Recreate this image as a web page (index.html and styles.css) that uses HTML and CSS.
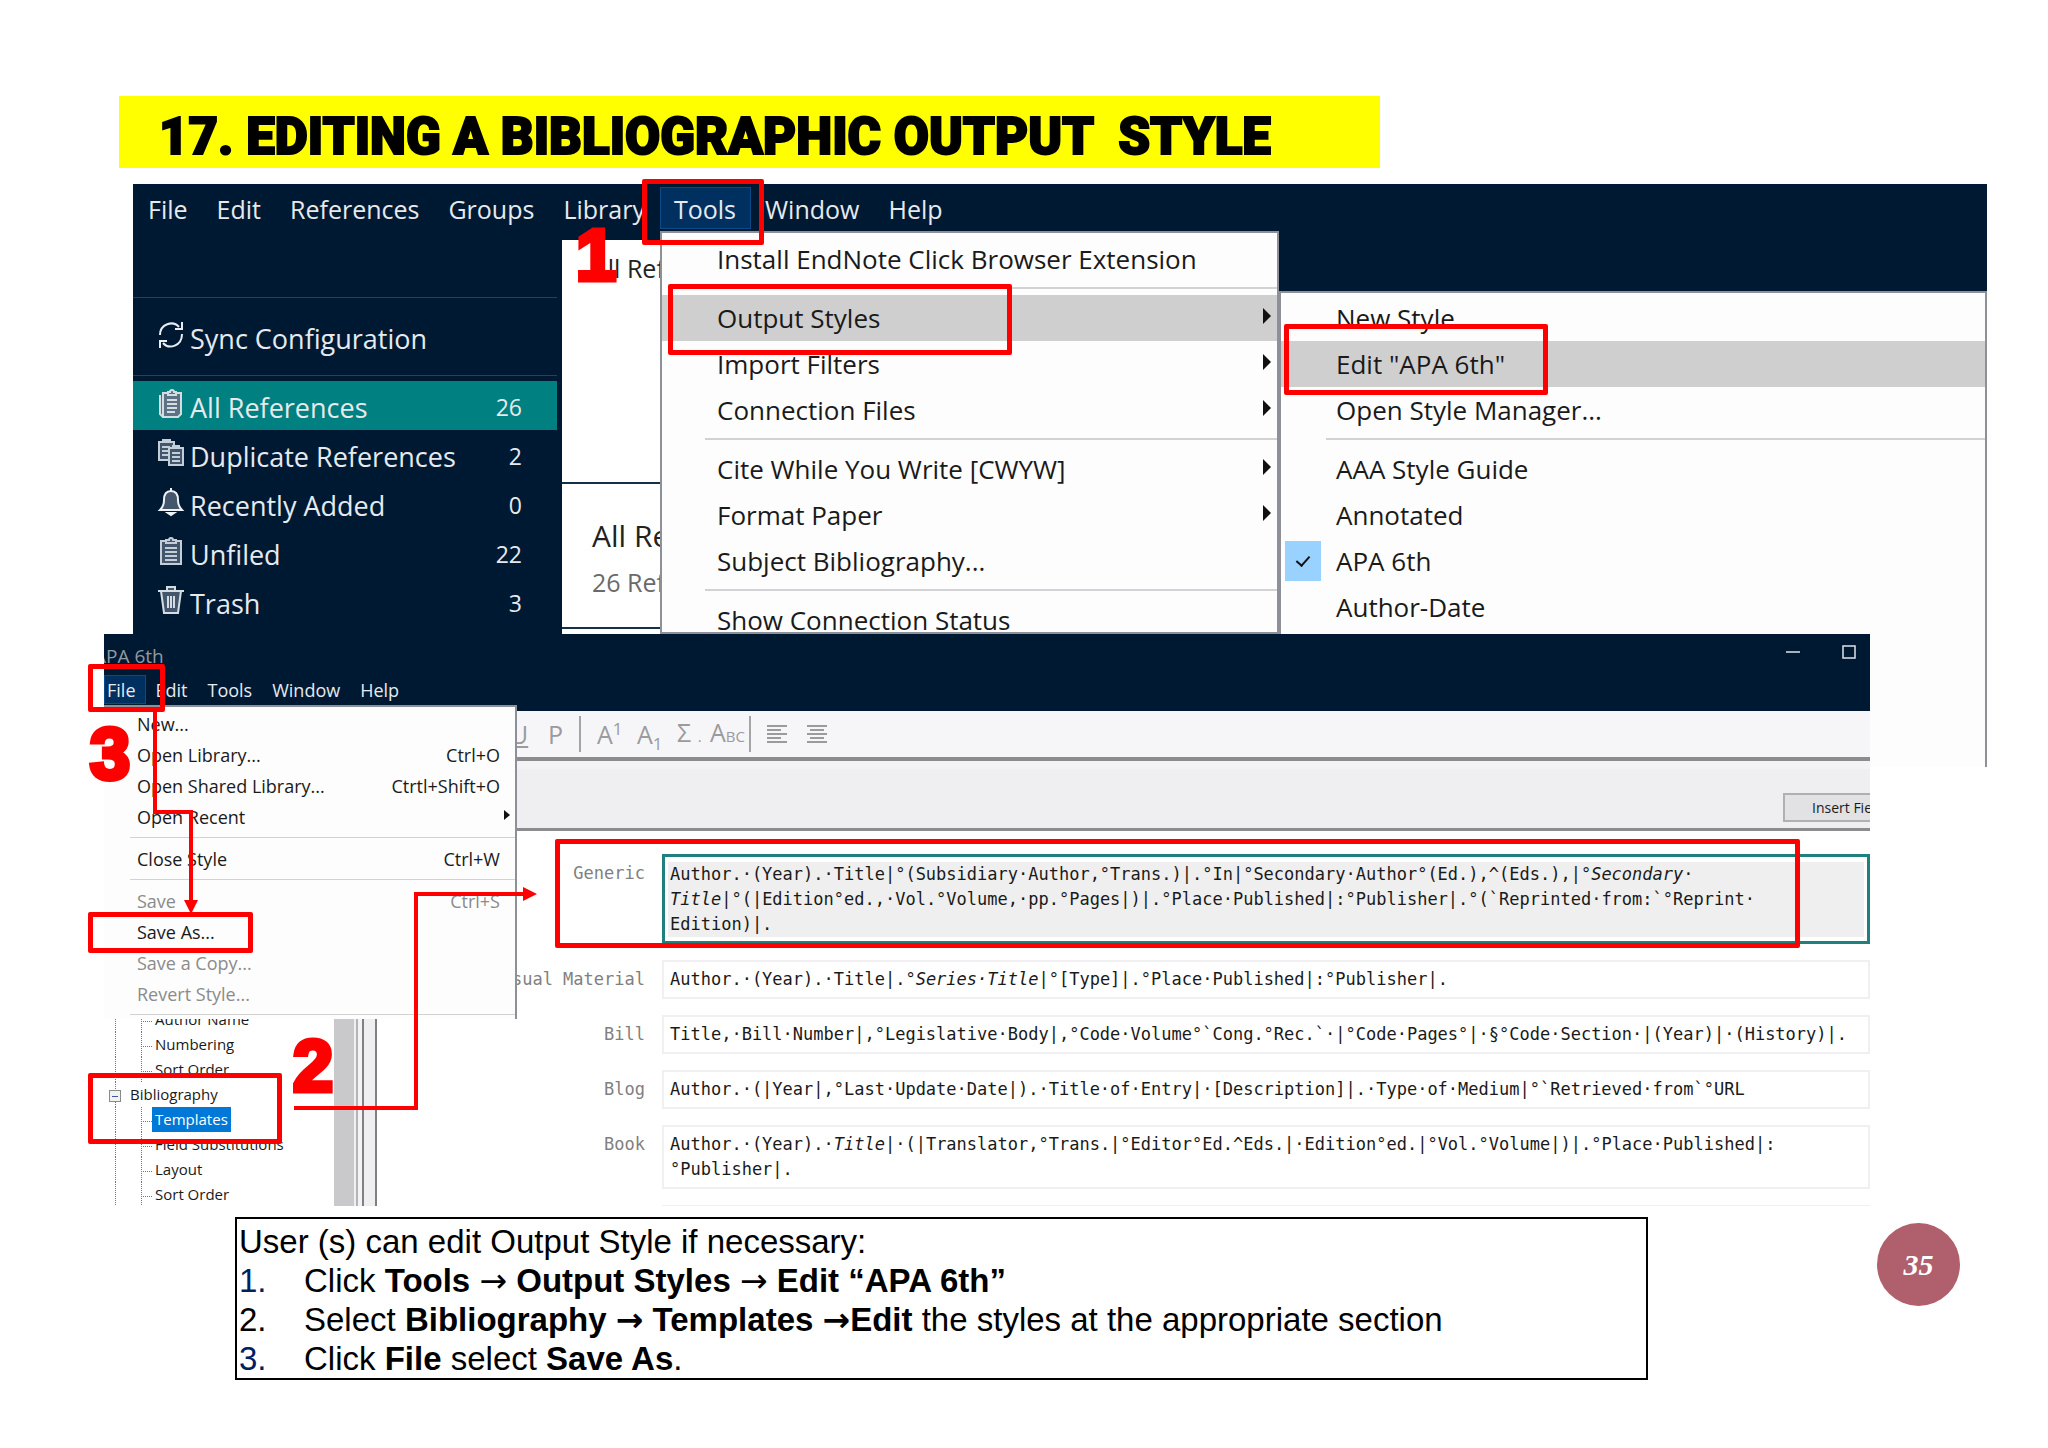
FILE: index.html
```html
<!DOCTYPE html>
<html lang="en">
<head>
    <meta charset="UTF-8">
    <meta name="viewport" content="width=device-width, initial-scale=1.0">
    <title>Editing a Bibliographic Output Style</title>
    <link rel="stylesheet" href="styles.css">
</head>
<body>
    <h1 class="slide-title">17. EDITING A BIBLIOGRAPHIC OUTPUT  STYLE</h1>

    <!-- Library window -->
    <section class="library">
        <nav class="menubar">
            <button>File</button>
            <button>Edit</button>
            <button>References</button>
            <button>Groups</button>
            <button>Library</button>
            <button class="open">Tools</button>
            <button>Window</button>
            <button>Help</button>
        </nav>

        <div class="library-body">
            <aside class="sidebar">
                <button class="side-row sync">
                    <svg class="icon" viewBox="0 0 28 30" fill="none" stroke="#e8edf2" stroke-width="2"><path d="M3 15C3 4 16 0 22 7M25 2v7h-7M25 14C25 26 12 30 6 23M3 28v-7h7"/></svg>
                    <span>Sync Configuration</span>
                </button>
                <button class="side-row active">
                    <svg class="icon" viewBox="0 0 28 30" fill="#5d7285" stroke="#d5dde4" stroke-width="2"><path d="M3 6v19l3 3h13"/><path d="M6 4h18v21l-3 3H6z"/><path d="M11 6V3h2a2 2 0 0 1 4 0h2v3zM10 11h10M10 15h10M10 19h10M10 23h8"/></svg>
                    <span>All References</span><span class="count">26</span>
                </button>
                <button class="side-row">
                    <svg class="icon" viewBox="0 0 28 30" fill="#43566b" stroke="#c3ced8" stroke-width="2"><path d="M2 4h15v18H2zM6 4V2h7v2M5 9h8M5 13h8M5 17h6"/><path d="M12 10h14v17H12zM16 10V8h6v2M15 15h8M15 19h8M15 23h8"/></svg>
                    <span>Duplicate References</span><span class="count">2</span>
                </button>
                <button class="side-row">
                    <svg class="icon" viewBox="0 0 28 30" fill="#43566b" stroke="#eef2f5" stroke-width="2"><path d="M14 4c-5 0-7 4-7 9 0 5-1 7-4 10h22c-3-3-4-5-4-10 0-5-2-9-7-9zM14 1v3"/><path d="M11 26h6l-3 2z" fill="#eef2f5"/></svg>
                    <span>Recently Added</span><span class="count">0</span>
                </button>
                <button class="side-row">
                    <svg class="icon" viewBox="0 0 28 30" fill="#43566b" stroke="#c3ced8" stroke-width="2"><path d="M4 5h20v23H4z"/><path d="M9 7V4h3a2 2 0 0 1 4 0h3v3zM8 12h12M8 16h12M8 20h12M8 24h12"/></svg>
                    <span>Unfiled</span><span class="count">22</span>
                </button>
                <button class="side-row">
                    <svg class="icon" viewBox="0 0 28 30" fill="#43566b" stroke="#d5dde4" stroke-width="2"><path d="M4 6h20l-3 22H7zM1 6h26M10 5V2h8v3M11 11v12M14 11v12M17 11v12"/></svg>
                    <span>Trash</span><span class="count">3</span>
                </button>
            </aside>
            <main class="results">
                <p class="crumb">All References</p>
                <div class="group">
                    <h2>All References</h2>
                    <p>26 References</p>
                </div>
            </main>
        </div>

        <div class="menu tools-menu">
            <button>Install EndNote Click Browser Extension</button>
            <hr>
            <button class="selected sub">Output Styles</button>
            <button class="sub">Import Filters</button>
            <button class="sub">Connection Files</button>
            <hr>
            <button class="sub">Cite While You Write [CWYW]</button>
            <button class="sub">Format Paper</button>
            <button>Subject Bibliography...</button>
            <hr>
            <button>Show Connection Status</button>
        </div>

        <div class="menu styles-menu">
            <button>New Style</button>
            <button class="selected">Edit "APA 6th"</button>
            <button>Open Style Manager...</button>
            <hr>
            <button>AAA Style Guide</button>
            <button>Annotated</button>
            <label class="check-item"><input type="checkbox" checked>APA 6th</label>
            <button>Author-Date</button>
        </div>

        <div class="frame frame-tools"></div>
        <div class="frame frame-output"></div>
        <div class="frame frame-edit"></div>
        <span class="step step-1">1</span>
    </section>

    <!-- Style editor window -->
    <section class="editor">
        <div class="editor-window">
            <header class="editor-header">
                <div class="titlebar">
                    <span class="window-name">APA 6th</span>
                    <button class="window-button" aria-label="Minimize"><svg viewBox="0 0 14 14" stroke="#dfe4e9" stroke-width="1.5"><path d="M0 7h14"/></svg></button>
                    <button class="window-button" aria-label="Maximize"><svg viewBox="0 0 14 14" fill="none" stroke="#dfe4e9" stroke-width="1.5"><path d="M1 1h12v12H1z"/></svg></button>
                </div>
                <nav class="menubar small">
                    <button class="open">File</button>
                    <button>Edit</button>
                    <button>Tools</button>
                    <button>Window</button>
                    <button>Help</button>
                </nav>
            </header>

            <div class="toolbar">
                <button class="underline">U</button>
                <button>P</button>
                <i class="divider"></i>
                <button>A<sup>1</sup></button>
                <button>A<sub>1</sub></button>
                <button>Σ <small>.</small></button>
                <button class="caps">A<small>BC</small></button>
                <i class="divider"></i>
                <button aria-label="Align left"><svg viewBox="0 0 20 20" stroke="#9b9b9d" stroke-width="2"><path d="M0 2h20M0 6h14M0 10h20M0 14h14M0 18h20"/></svg></button>
                <button aria-label="Center"><svg viewBox="0 0 20 20" stroke="#9b9b9d" stroke-width="2"><path d="M0 2h20M3 6h14M0 10h20M3 14h14M0 18h20"/></svg></button>
            </div>
            <div class="insert-bar"><button>Insert Field</button></div>

            <div class="editor-body">
                <ul class="tree">
                    <li class="leaf">Author Name</li>
                    <li class="leaf">Numbering</li>
                    <li class="leaf">Sort Order</li>
                    <li class="branch"><button class="toggle" aria-label="Collapse"></button>Bibliography</li>
                    <li class="leaf"><span class="picked">Templates</span></li>
                    <li class="leaf">Field Substitutions</li>
                    <li class="leaf">Layout</li>
                    <li class="leaf">Sort Order</li>
                </ul>
                <div class="splitter"></div>
                <div class="templates">
                    <span class="name" id="generic">Generic</span>
                    <div class="field focused" role="textbox" contenteditable="true" aria-labelledby="generic"><div class="shade">Author.·(Year).·Title|°(Subsidiary·Author,°Trans.)|.°In|°Secondary·Author°(Ed.),^(Eds.),|°<em>Secondary</em>·<br><em>Title</em>|°(|Edition°ed.,·Vol.°Volume,·pp.°Pages|)|.°Place·Published|:°Publisher|.°(`Reprinted·from:`°Reprint·<br>Edition)|.</div></div>

                    <span class="name" id="audio">Audiovisual Material</span>
                    <div class="field" role="textbox" contenteditable="true" aria-labelledby="audio">Author.·(Year).·Title|.°<em>Series·Title</em>|°[Type]|.°Place·Published|:°Publisher|.</div>

                    <span class="name" id="bill">Bill</span>
                    <div class="field" role="textbox" contenteditable="true" aria-labelledby="bill">Title,·Bill·Number|,°Legislative·Body|,°Code·Volume°`Cong.°Rec.`·|°Code·Pages°|·§°Code·Section·|(Year)|·(History)|.</div>

                    <span class="name" id="blog">Blog</span>
                    <div class="field" role="textbox" contenteditable="true" aria-labelledby="blog">Author.·(|Year|,°Last·Update·Date|).·Title·of·Entry|·[Description]|.·Type·of·Medium|°`Retrieved·from`°URL</div>

                    <span class="name" id="book">Book</span>
                    <div class="field" role="textbox" contenteditable="true" aria-labelledby="book">Author.·(Year).·<em>Title</em>|·(|Translator,°Trans.|°Editor°Ed.^Eds.|·Edition°ed.|°Vol.°Volume|)|.°Place·Published|:<br>°Publisher|.</div>

                    <span></span>
                    <div class="field"></div>
                </div>
            </div>
        </div>

        <div class="menu file-menu">
            <button>New...</button>
            <button>Open Library...<kbd>Ctrl+O</kbd></button>
            <button>Open Shared Library...<kbd>Ctrtl+Shift+O</kbd></button>
            <button class="sub">Open Recent</button>
            <hr>
            <button>Close Style<kbd>Ctrl+W</kbd></button>
            <hr>
            <button disabled>Save<kbd>Ctrl+S</kbd></button>
            <button>Save As...</button>
            <button disabled>Save a Copy...</button>
            <button disabled>Revert Style...</button>
            <hr>
        </div>

        <div class="frame frame-file"></div>
        <div class="frame frame-save"></div>
        <div class="frame frame-bib"></div>
        <div class="frame frame-generic"></div>
        <span class="step step-2">2</span>
        <span class="step step-3">3</span>
        <svg class="arrows" viewBox="0 0 460 500" width="460" height="500" fill="none" stroke="#f00" stroke-width="4">
            <path d="M51 78v100h36v90"/>
            <path d="M80 266h14l-7 14z" fill="#f00" stroke="none"/>
            <path d="M190 474h122V260h110"/>
            <path d="M419 253v14l14-7z" fill="#f00" stroke="none"/>
        </svg>
    </section>

    <footer class="slide-footer">
        <div class="note">
            <p>User (s) can edit Output Style if necessary:</p>
            <ol>
                <li>Click <b>Tools</b> <span class="arrow">→</span> <b>Output Styles</b> <span class="arrow">→</span> <b>Edit “APA 6th”</b></li>
                <li>Select <b>Bibliography <span class="arrow">→</span> Templates <span class="arrow">→</span>Edit</b> the styles at the appropriate section</li>
                <li>Click <b>File</b> select <b>Save As</b>.</li>
            </ol>
        </div>
        <span class="page-number">35</span>
    </footer>
</body>
</html>
```
FILE: styles.css
```css
* { box-sizing: border-box; }
body { margin: 0; padding-top: 96px; background-color: #fff; color: #1a1a1a; font-family: "Open Sans", "Noto Sans", sans-serif; font-size: 25px; }
p, h1, h2, ul, ol { margin: 0; padding: 0; font-weight: normal; }
button { margin: 0; padding: 0; border: none; background: none; color: inherit; font: inherit; text-align: left; white-space: nowrap; }

.slide-title { width: 1261px; max-width: 100%; height: 72px; margin-left: 119px; padding-left: 40px; background-color: #ff0; color: #000; font-family: Roboto, "Liberation Sans", sans-serif; font-size: 51px; font-weight: 900; line-height: 82px; white-space: pre; -webkit-text-stroke: 2px #000; }

/* library window */
.library { position: relative; margin: 16px 61px 0 133px; background-color: #001933; color: #e6eaee; }
.menubar { display: flex; height: 56px; padding-left: 1px; }
.menubar button { height: 42px; margin-top: 3px; padding: 0 15px 0 14px; line-height: 45px; }
.menubar .open { background-color: #003060; outline: 1px solid #0b4a86; outline-offset: -1px; }
.library-body { display: grid; grid-template-columns: 424px 1fr; column-gap: 5px; height: 394px; }
.sidebar { padding-top: 57px; font-size: 27px; }
.side-row { display: flex; align-items: center; width: 100%; height: 49px; padding: 3px 35px 0 24px; }
.side-row .icon { width: 28px; height: 30px; margin-right: 5px; margin-bottom: 6px; flex: none; }
.sync { height: 79px; margin-bottom: 5px; border: solid #2b4058; border-width: 1px 0; }
.active { background-color: #008080; }
.count { margin-left: auto; font-size: 23px; }
.results { max-width: 716px; background-color: #fff; color: #222; white-space: nowrap; overflow: hidden; }
.crumb { height: 242px; padding: 11px 30px; line-height: 34px; }
.group { height: 147px; padding: 30px 30px; border: solid #12324a; border-width: 2px 0; }
.group h2 { font-size: 30px; line-height: 44px; }
.group p { color: #6a6a6a; line-height: 48px; }

/* drop-down menus */
.menu { position: absolute; background-color: #fdfdfd; color: #1a1a1a; border: 2px solid #8d9096; font-size: 26px; }
.menu button, .check-item { position: relative; display: flex; width: 100%; height: 46px; padding-left: 54px; align-items: center; }
.menu hr { height: 2px; margin: 5px 0 6px 43px; border: none; background-color: #d2d2d4; }
.menu .selected { background-color: #cfcfd0; }
.menu .sub::after { content: ""; margin: 0 6px 4px auto; border: solid transparent; border-width: 8px 0 8px 8px; border-left-color: #111; }
.menu button:disabled { color: #8b8b8b; }
.tools-menu { top: 47px; left: 527px; width: 619px; height: 403px; padding-top: 3px; overflow: hidden; }
.tools-menu button { padding-left: 55px; }
.styles-menu { top: 107px; left: 1146px; right: 0; height: 476px; padding-top: 2px; border-bottom: none; }
.styles-menu button { padding-left: 55px; }
.styles-menu hr { margin-left: 45px; }
.check-item { padding-left: 4px; }
.check-item input { appearance: none; display: grid; place-items: center; width: 36px; height: 40px; margin: 0 15px 0 0; background-color: #99d1ff; }
.check-item input::before { content: ""; width: 6px; height: 11px; margin-bottom: 4px; border: solid #111; border-width: 0 2px 2px 0; transform: rotate(42deg); }

/* style editor window */
.editor { position: relative; margin: 0 178px 0 104px; }
.editor-window { position: relative; overflow: hidden; background-color: #fff; }
.editor-header { height: 77px; background-color: #001933; color: #e6eaee; }
.titlebar { display: flex; align-items: center; height: 41px; padding-right: 14px; }
.window-name { margin: 3px auto 0 -10px; color: #9299a1; font-size: 19px; }
.window-button { width: 14px; height: 14px; margin: 0 0 6px 42px; line-height: 0; }
.menubar.small { height: 30px; padding: 0; font-size: 18px; }
.small button { height: 29px; margin: 0; padding: 0 10px; line-height: 30px; }
.small button:first-child { padding-left: 3px; }
.toolbar { display: flex; align-items: center; height: 50px; padding-left: 406px; background-color: #f6f6f8; border-bottom: 4px solid #8c8c8e; color: #9b9b9d; font-size: 25px; }
.toolbar button { width: 40px; line-height: 36px; }
.toolbar .underline { width: 38px; text-decoration: underline; }
.toolbar button:nth-child(2) { width: 31px; }
.toolbar .divider { width: 2px; height: 36px; margin-right: 16px; background-color: #a5a5a7; }
.toolbar sup, .toolbar sub { font-size: 17px; line-height: 0; }
.toolbar small { font-size: 15px; }
.toolbar .caps { width: 32px; margin: 0 7px 0 -7px; }
.toolbar svg { display: block; width: 20px; height: 20px; }
.insert-bar { display: flex; justify-content: flex-end; height: 70px; padding-top: 24px; background-color: #efeef0; border-top: 8px solid #f3f3f5; border-bottom: 3px solid #8c8c8e; }
.insert-bar button { width: 120px; height: 29px; margin-right: -33px; padding-left: 27px; border: 2px solid #b0b0b2; background-color: #e2e1e3; font-size: 14px; line-height: 24px; }
.editor-body { display: flex; height: 375px; }

.tree { width: 230px; flex: none; padding-top: 176px; list-style: none; font-size: 15px; line-height: 25px; white-space: nowrap; }
.tree li { position: relative; height: 25px; margin-left: 11px; border-left: 1px dotted #777; }
.leaf { padding-left: 39px; }
.leaf::before { content: ""; position: absolute; left: 25px; top: 0; width: 10px; height: 14px; border: dotted #777; border-width: 0 0 1px 1px; }
.leaf::after { content: ""; position: absolute; left: 25px; top: 14px; height: 11px; border-left: 1px dotted #777; }
.branch { padding-left: 14px; }
.toggle { position: absolute; left: -7px; top: 8px; width: 12px; height: 12px; border: 1px solid #8a8a8a; background: linear-gradient(#4058a0, #4058a0) center / 6px 1px no-repeat #f2f2f2; }
.picked { display: inline-block; margin-left: -3px; padding: 0 3px; background-color: #0078d7; color: #fff; }
.splitter { width: 43px; flex: none; background: linear-gradient(to right, #c9c8ca 20px, #efeef0 20px 22px, #b4b4b6 22px 24px, #f3f3f5 24px 28px, #808082 28px 30px, #efeef0 30px 41px, #808082 41px); }
.templates { flex: 1; display: grid; grid-template-columns: 268px 1fr; grid-auto-rows: max-content; align-content: start; gap: 16px 17px; padding-top: 23px; font-family: "DejaVu Sans Mono", "Liberation Mono", monospace; font-size: 17px; line-height: 25px; white-space: nowrap; }
.name { justify-self: end; padding-top: 7px; color: #808080; }
.field { min-width: 0; min-height: 39px; padding: 5px 6px; border: 2px solid #f0eff1; }
.focused { padding: 5px 3px 4px; border: 3px solid #1f807d; }
.shade { padding-left: 2px; background-color: #efefef; }

.file-menu { top: 71px; left: 0; width: 413px; padding-top: 1px; border-left: none; border-bottom: none; font-size: 18px; }
.file-menu button { height: 31px; padding-left: 33px; }
.file-menu hr { height: 1px; margin: 5px 0 5px 26px; }
.file-menu .sub::after { margin-right: 5px; border-width: 5px 0 5px 6px; }
.file-menu hr:last-child { margin-bottom: 4px; }
.file-menu kbd { margin: 0 15px 0 auto; font: inherit; }

/* red call-outs */
.frame { position: absolute; border: 5px solid #f00; border-radius: 2px; }
.frame-tools { left: 509px; top: -5px; width: 122px; height: 66px; }
.frame-output { left: 535px; top: 100px; width: 344px; height: 71px; }
.frame-edit { left: 1151px; top: 140px; width: 264px; height: 71px; }
.frame-file { left: -16px; top: 30px; width: 77px; height: 48px; }
.frame-save { left: -16px; top: 278px; width: 165px; height: 41px; }
.frame-bib { left: -16px; top: 439px; width: 194px; height: 71px; }
.frame-generic { left: 451px; right: 70px; top: 205px; height: 109px; }
.step { position: absolute; color: #f00; font-family: "Liberation Sans", Arial, sans-serif; font-size: 72px; font-weight: bold; line-height: 74px; -webkit-text-stroke: 5px #f00; }
.step-1 { left: 443px; top: 34px; }
.step-2 { left: 189px; top: 395px; }
.step-3 { left: -14px; top: 83px; }
.arrows { position: absolute; left: 0; top: 0; }

.slide-footer { display: flex; align-items: flex-start; gap: 229px; padding: 11px 88px 0 235px; }
.note { flex: 1; padding: 3px 2px 0; border: 2px solid #000; color: #000; font-family: "Liberation Sans", Arial, sans-serif; font-size: 33px; line-height: 39px; }
.note ol { list-style: none; counter-reset: item; }
.note li { position: relative; padding-left: 65px; counter-increment: item; }
.note li::before { content: counter(item) "."; position: absolute; left: 0; color: #002060; }
.note li:nth-child(2)::before { color: #000; }
.arrow { font-family: "DejaVu Sans", sans-serif; line-height: 0; }
.page-number { width: 83px; height: 83px; margin-top: 6px; border-radius: 50%; background-color: #b05f6d; color: #fff; font-family: "Liberation Serif", serif; font-size: 30px; font-style: italic; font-weight: bold; line-height: 83px; text-align: center; }
```
